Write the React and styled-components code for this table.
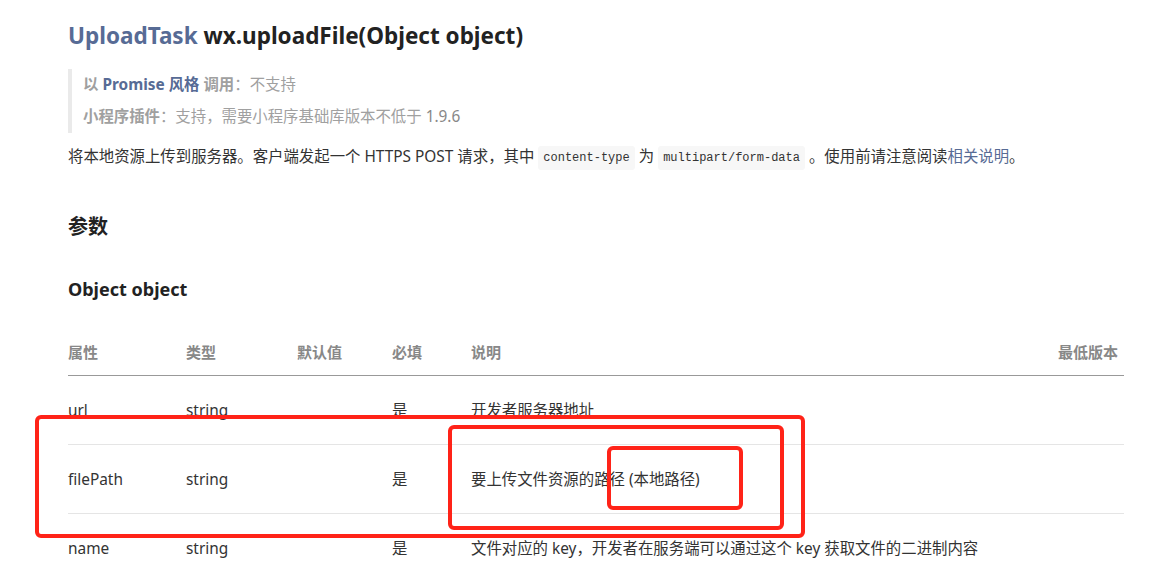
import React from "react";
import styled, { createGlobalStyle } from "styled-components";

const GlobalStyle = createGlobalStyle`
  html, body {
    margin: 0;
    padding: 0;
    background: #fff;
  }
  body {
    font-family: "Noto Sans", "Noto Sans CJK SC", sans-serif;
    color: #333;
  }
`;

const rows = [
  { name: "url", type: "string", def: "", required: "是", desc: "开发者服务器地址", since: "" },
  { name: "filePath", type: "string", def: "", required: "是", desc: "要上传文件资源的路径 (本地路径)", since: "" },
  { name: "name", type: "string", def: "", required: "是", desc: "文件对应的 key，开发者在服务端可以通过这个 key 获取文件的二进制内容", since: "" },
];

const App = () => {
  return (
    <Page>
      <GlobalStyle />
      <Title>
        <TitleLink>UploadTask</TitleLink> wx.uploadFile(Object object)
      </Title>
      <Quote>
        <QuoteLine>
          <Strong>以 </Strong>
          <QuoteLink>Promise 风格</QuoteLink>
          <Strong> 调用</Strong>：不支持
        </QuoteLine>
        <QuoteLine>
          <Strong>小程序插件</Strong>：支持，需要小程序基础库版本不低于 <Version>1.9.6</Version>
        </QuoteLine>
      </Quote>
      <Para>
        将本地资源上传到服务器。客户端发起一个 HTTPS POST 请求，其中 <Code>content-type</Code> 为 <Code>multipart/form-data</Code> 。使用前请注意阅读<Link>相关说明</Link>。
      </Para>
      <H3>参数</H3>
      <H4>Object object</H4>
      <Table>
        <HeadRow>
          <HeadCell>属性</HeadCell>
          <HeadCell>类型</HeadCell>
          <HeadCell>默认值</HeadCell>
          <HeadCell>必填</HeadCell>
          <HeadCell>说明</HeadCell>
          <HeadCell $right>最低版本</HeadCell>
        </HeadRow>
        {rows.map((r) => (
          <Row key={r.name}>
            <Cell>{r.name}</Cell>
            <Cell>{r.type}</Cell>
            <Cell>{r.def}</Cell>
            <Cell>{r.required}</Cell>
            <Cell>{r.desc}</Cell>
            <Cell $right>{r.since}</Cell>
          </Row>
        ))}
      </Table>

      {/* red annotation boxes drawn over the screenshot */}
      <Mark style={{ left: 35, top: 415, width: 770, height: 123 }} />
      <Mark style={{ left: 448, top: 425, width: 336, height: 105 }} />
      <Mark style={{ left: 607, top: 446, width: 136, height: 64 }} />
    </Page>
  );
};

const Page = styled.div`
  position: relative;
  width: 1056px;
  height: 575px;
  overflow: hidden;
  padding-left: 68px;
  font-size: 15.4px;
`;

const Title = styled.h1`
  margin: 18px 0 0;
  font-size: 22.5px;
  line-height: 36px;
  height: 36px;
  font-weight: 700;
  color: #222;
`;

const TitleLink = styled.span`
  color: #576b95;
`;

const Quote = styled.div`
  margin-top: 15px;
  border-left: 4px solid #eaeaea;
  padding-left: 11px;
  color: #a0a0a0;
`;

const QuoteLine = styled.div`
  line-height: 32px;
  height: 32px;
`;

const Strong = styled.span`
  font-weight: 700;
  color: #a0a0a0;
`;

const QuoteLink = styled.span`
  font-weight: 700;
  color: #576b95;
`;

const Version = styled.span`
  color: #888;
`;

const Para = styled.p`
  margin: 12px 0 0;
  height: 24px;
  line-height: 24px;
  color: #333;
`;

const Code = styled.code`
  display: inline-block;
  font-family: "Liberation Mono", monospace;
  font-size: 12px;
  line-height: 18px;
  padding: 3px 5px;
  background: #f7f7f7;
  border-radius: 3px;
  color: #333;
  vertical-align: middle;
`;

const Link = styled.span`
  color: #576b95;
`;

const H3 = styled.h3`
  margin: 43px 0 0;
  font-size: 20px;
  line-height: 30px;
  height: 30px;
  font-weight: 700;
  color: #222;
`;

const H4 = styled.h4`
  margin: 33px 0 0;
  font-size: 18px;
  line-height: 28px;
  height: 28px;
  font-weight: 700;
  color: #222;
`;

const Table = styled.div`
  margin-top: 38px;
  width: 1056px;
`;

const grid = `
  display: grid;
  grid-template-columns: 118px 111px 95px 79px 1fr auto;
  align-items: center;
`;

const HeadRow = styled.div`
  ${grid}
  height: 22px;
  padding-bottom: 12px;
  border-bottom: 1px solid #999;
`;

const HeadCell = styled.div`
  font-weight: 700;
  color: #888;
  font-size: 15px;
  line-height: 22px;
  text-align: ${({ $right }) => ($right ? "right" : "left")};
  padding-right: ${({ $right }) => ($right ? "6px" : "0")};
`;

const Row = styled.div`
  ${grid}
  box-sizing: border-box;
  height: 69px;
  padding-top: 2px;
  border-bottom: 1px solid #e5e5e5;
`;

const Cell = styled.div`
  line-height: 22px;
  color: #333;
  white-space: nowrap;
  text-align: ${({ $right }) => ($right ? "right" : "left")};
`;

const Mark = styled.div`
  position: absolute;
  box-sizing: border-box;
  border: 4px solid #ff2318;
  border-radius: 6px;
  pointer-events: none;
`;

export default App;
